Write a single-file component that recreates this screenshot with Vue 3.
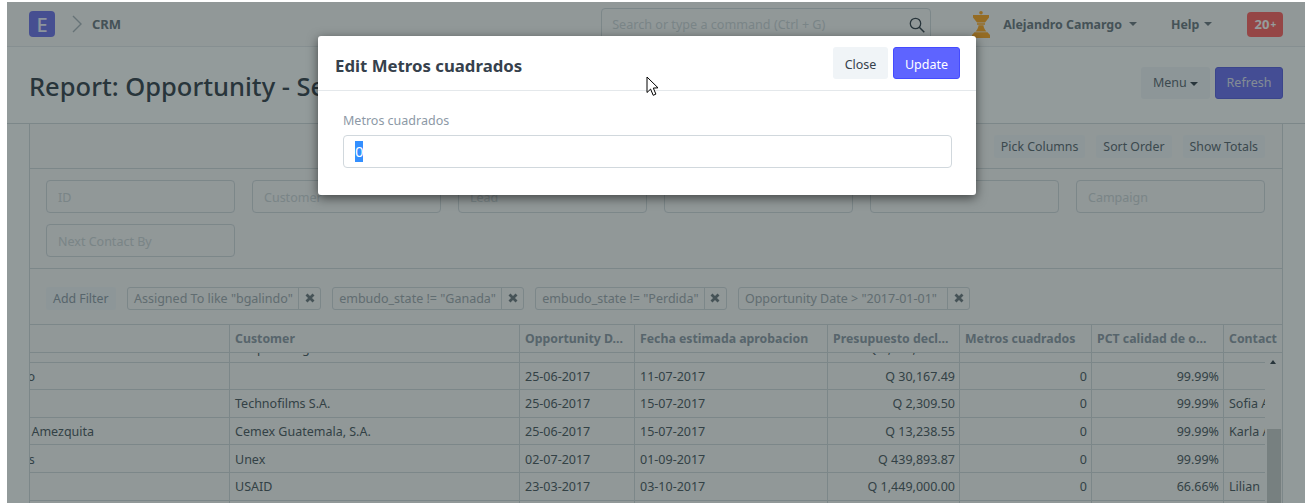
<script setup>
const filters = ['ID', 'Customer', 'Lead', '', '', 'Campaign', 'Next Contact By']
const chips = ['Assigned To like "bgalindo"', 'embudo_state != "Ganada"', 'embudo_state != "Perdida"', 'Opportunity Date > "2017-01-01"']
const head = ['', 'Customer', 'Opportunity D...', 'Fecha estimada aprobacion', 'Presupuesto decl...', 'Metros cuadrados', 'PCT calidad de o...', 'Contact']
const rows = [
  ['Rocio Solis', 'Grupo Mongo', '24-06-2017', '19-07-2017', 'Q 1,166,304.84', '0', '99.99%', ''],
  ['Alvaro', '', '25-06-2017', '11-07-2017', 'Q 30,167.49', '0', '99.99%', ''],
  ['', 'Technofilms S.A.', '25-06-2017', '15-07-2017', 'Q 2,309.50', '0', '99.99%', 'Sofia Alvarez'],
  ['Karla Amezquita', 'Cemex Guatemala, S.A.', '25-06-2017', '15-07-2017', 'Q 13,238.55', '0', '99.99%', 'Karla Amezquita'],
  ['Carlos', 'Unex', '02-07-2017', '01-09-2017', 'Q 439,893.87', '0', '99.99%', ''],
  ['', 'USAID', '23-03-2017', '03-10-2017', 'Q 1,449,000.00', '0', '66.66%', 'Lilian'],
  ['', '', '', '', '', '', '', '']
]
</script>

<template>
  <div class="root">
    <div class="page">
      <header class="nav">
        <div class="logo">E</div>
        <svg class="chev" width="10" height="18" viewBox="0 0 10 18"><path d="M1 1l8 8-8 8" fill="none" stroke="#a9b3bb" stroke-width="1.4" /></svg>
        <span class="crumb">CRM</span>
        <div class="search">
          <span class="search-ph">Search or type a command (Ctrl + G)</span>
          <svg width="16" height="16" viewBox="0 0 16 16"><circle cx="6.5" cy="6.5" r="5.2" fill="none" stroke="#36414c" stroke-width="1.3" /><path d="M10.3 10.3l5 5" stroke="#36414c" stroke-width="1.5" /></svg>
        </div>
        <svg class="king" width="20" height="27" viewBox="0 0 20 27">
          <circle cx="10" cy="1.800" r="1.800" fill="#ffa722" />
          <path fill="#ffa722" d="M2 4h16v2.500l-4 5H6l-4-5zM6 12.300h8v1.500H6zM7.500 14.300h5c0 2 1 4.200 3 6.200H4.500c2-2 3-4.200 3-6.200zM3.500 21.200h13l2.500 2.800v3H1v-3z" />
        </svg>
        <span class="user">Alejandro Camargo</span><i class="caret user-caret"></i>
        <span class="help">Help</span><i class="caret help-caret"></i>
        <span class="badge">20<small>+</small></span>
      </header>

      <div class="head">
        <h1 class="title">Report: Opportunity - Seguimiento</h1>
        <div class="head-actions">
          <button class="btn menu">Menu <i class="caret dark"></i></button>
          <button class="btn refresh">Refresh</button>
        </div>
      </div>

      <section class="card">
        <div class="tools">
          <button class="btn sm">Pick Columns</button>
          <button class="btn sm">Sort Order</button>
          <button class="btn sm">Show Totals</button>
        </div>
        <div class="filters">
          <div v-for="(f, i) in filters" :key="i" class="field">{{ f }}</div>
        </div>
        <div class="chips">
          <button class="btn sm add">Add Filter</button>
          <div v-for="c in chips" :key="c" class="chip">
            <span class="chip-text">{{ c }}</span>
            <span class="chip-x"><svg width="10" height="10" viewBox="0 0 10 10"><path d="M1.500 1.500l7 7M8.500 1.500l-7 7" stroke="#6d7880" stroke-width="2.800" /></svg></span>
          </div>
        </div>
        <div class="tbl">
          <div class="tbl-inner">
            <div class="row hd">
              <div v-for="(h, i) in head" :key="i" class="cell">{{ h }}</div>
            </div>
            <div class="body">
              <div class="body-inner">
                <div v-for="(r, ri) in rows" :key="ri" class="row">
                  <div v-for="(c, ci) in r" :key="ci" class="cell" :class="{ num: ci >= 4 && ci <= 6 }">{{ c }}</div>
                </div>
              </div>
            </div>
          </div>
          <div class="scrollbar"><i class="sb-up"></i><i class="sb-thumb"></i></div>
        </div>
      </section>
    </div>

    <div class="backdrop"></div>

    <div class="modal">
      <div class="modal-head">
        <h4 class="modal-title">Edit Metros cuadrados</h4>
        <div class="modal-actions">
          <button class="btn close">Close</button>
          <button class="btn update">Update</button>
        </div>
      </div>
      <div class="modal-body">
        <label class="label">Metros cuadrados</label>
        <div class="input"><span class="sel">0</span></div>
      </div>
    </div>

    <svg class="cursor" width="14" height="21" viewBox="0 0 14 21">
      <path d="M1 1v15.500l3.600-3.400 2.600 6.200 2.700-1.200-2.600-6 4.700-.300z" fill="#fff" stroke="#000" stroke-width="1" />
    </svg>
  </div>
</template>

<style>
html, body { margin: 0; background: #fff; }
</style>

<style scoped>
* { box-sizing: border-box; }
.root {
  position: relative;
  width: 1305px;
  height: 503px;
  overflow: hidden;
  background: #fff;
  font-family: "Noto Sans", "Open Sans", sans-serif;
  font-size: 12.5px;
  color: #36414c;
}
.page {
  position: absolute;
  inset: 2px 0 0 7px;
  background: #fafbfc;
  display: flex;
  flex-direction: column;
  overflow: hidden;
}
.nav {
  height: 45px;
  flex: none;
  display: flex;
  align-items: center;
  padding-left: 22px;
  background: #f8f8f8;
  border-bottom: 1px solid #e4e8eb;
}
.logo {
  width: 26px;
  height: 26px;
  border-radius: 4px;
  background: #6e72ea;
  color: #eef0ff;
  font-size: 20px;
  font-weight: 500;
  display: flex;
  align-items: center;
  justify-content: center;
}
.chev { margin-left: 17px; }
.crumb { margin-left: 10px; font-weight: 700; font-size: 13px; color: #6c7680; }
.search {
  margin-left: 480px;
  width: 330px;
  height: 33px;
  margin-top: 1px;
  border: 1px solid #d1d8dd;
  border-radius: 4px;
  display: flex;
  align-items: center;
  justify-content: space-between;
  padding: 0 5px 0 10px;
  font-size: 12.600px;
  color: #cdd4d8;
}
.king { margin-left: 40px; margin-top: 1px; }
.user { margin-left: 12px; font-weight: 700; font-size: 12.400px; color: #6c7680; }
.caret {
  display: inline-block;
  width: 0;
  height: 0;
  border-left: 4px solid transparent;
  border-right: 4px solid transparent;
  border-top: 4px solid #6c7680;
  vertical-align: middle;
}
.caret.dark { border-top-color: #36414c; }
.user-caret { margin-left: 7px; }
.help { margin-left: 34px; font-weight: 700; font-size: 12.400px; color: #6c7680; }
.help-caret { margin-left: 5px; }
.badge {
  margin-left: 35px;
  width: 36px;
  height: 25px;
  border-radius: 4px;
  background: #ff6060;
  color: #fff;
  font-weight: 700;
  font-size: 13px;
  display: flex;
  align-items: center;
  justify-content: center;
}
.badge small { font-size: 10px; margin-left: 1px; }
.head {
  height: 77px;
  flex: none;
  display: flex;
  align-items: center;
  justify-content: space-between;
  padding: 2px 22px 0 22px;
  background: #fcfdfd;
  border-bottom: 1px solid #d1d8dd;
}
.title { margin: 0; font-size: 25.500px; font-weight: 500; color: #36414c; white-space: nowrap; }
.head-actions { display: flex; gap: 5px; margin-top: -7px; }
.btn {
  font: inherit;
  border: 0;
  border-radius: 3px;
  background: #f0f4f7;
  color: #36414c;
  padding: 0;
}
.menu { width: 69px; height: 32px; font-size: 12.5px; color: #5a6670; }
.refresh { width: 68px; height: 32px; background: #6a6ef0; border: 1px solid #5a5ee0; color: #dfe0f2; }
.card {
  margin: 0 22px 0 22px;
  flex: 1;
  border-left: 1px solid #d1d8dd;
  border-right: 1px solid #d1d8dd;
  background: #f7f7f7;
  min-height: 0;
  display: flex;
  flex-direction: column;
}
.tools {
  height: 45px;
  flex: none;
  display: flex;
  align-items: center;
  justify-content: flex-end;
  gap: 11px;
  padding: 0 17px;
  border-bottom: 1px solid #d1d8dd;
}
.sm { height: 23px; padding: 0 7px; font-size: 12.350px; color: #5a6670; }
.filters {
  height: 100px;
  flex: none;
  display: grid;
  grid-template-columns: repeat(6, 189px);
  column-gap: 17px;
  row-gap: 11px;
  align-content: start;
  padding: 11px 16px 0;
  border-bottom: 1px solid #d1d8dd;
}
.field {
  height: 33px;
  border: 1px solid #d1d8dd;
  border-radius: 4px;
  padding: 1px 11px 0;
  display: flex;
  align-items: center;
  color: #cdd4d8;
  font-size: 12.500px;
}
.chips {
  height: 56px;
  flex: none;
  display: flex;
  align-items: center;
  gap: 11.400px;
  padding: 3px 16px 0;
  border-bottom: 1px solid #d1d8dd;
}
.add { width: 69.600px; padding: 0; color: #8d99a6; }
.chip {
  height: 23px;
  display: flex;
  border: 1px solid #d1d8dd;
  border-radius: 3px;
  align-items: stretch;
}
.chip-text { padding: 0 5.500px 0 6px; display: flex; align-items: center; white-space: nowrap; font-size: 12.500px; color: #a0a8b0; }
.chip:last-child .chip-text { padding-right: 10.500px; }
.chip-x { width: 21.500px; display: flex; align-items: center; justify-content: center; border-left: 1px solid #d1d8dd; }
.tbl { position: relative; flex: 1; min-height: 0; overflow: hidden; }
.tbl-inner { margin-left: -37px; width: 1400px; height: 100%; display: flex; flex-direction: column; }
.row {
  display: grid;
  grid-template-columns: 237px 290px 115px 193px 132px 132px 132px 200px;
  height: 27.600px;
  border-bottom: 1px solid #d1d8dd;
}
.hd { height: 28px; flex: none; }
.cell {
  padding: 1px 5px 0;
  display: flex;
  align-items: center;
  border-right: 1px solid #d1d8dd;
  white-space: nowrap;
  overflow: hidden;
  font-size: 12.500px;
  color: #4b575f;
}
.hd .cell { padding-top: 0; font-weight: 700; color: #8d99a6; font-size: 12.300px; }
.num { justify-content: flex-end; padding-right: 4px; }
.body { flex: 1; min-height: 0; overflow: hidden; }
.body-inner { margin-top: -18px; }
.scrollbar {
  position: absolute;
  right: 0;
  top: 29px;
  bottom: 0;
  width: 17px;
  background: #f7f7f7;
}
.sb-up {
  position: absolute;
  left: 5px;
  top: 6px;
  width: 0;
  height: 0;
  border-left: 3.500px solid transparent;
  border-right: 3.500px solid transparent;
  border-bottom: 4px solid #36414c;
}
.sb-thumb {
  position: absolute;
  left: 2px;
  right: 1px;
  top: 75px;
  bottom: 0;
  background: #c8cccc;
}
.backdrop { position: absolute; inset: 2px 0 0 7px; background: rgba(25, 40, 40, .46); }
.modal {
  position: absolute;
  left: 318px;
  top: 36px;
  width: 658px;
  height: 159px;
  background: #fff;
  border-radius: 3px;
  box-shadow: 0 3px 11px rgba(0, 0, 0, .55);
}
.modal-head {
  height: 55px;
  border-bottom: 1px solid #e4e8eb;
  display: flex;
  align-items: center;
  justify-content: space-between;
  padding: 0 16px 0 17px;
}
.modal-title { margin: 5px 0 0; font-size: 16.800px; font-weight: 700; color: #36414c; }
.modal-actions { display: flex; gap: 5px; }
.close { width: 55px; height: 32px; font-size: 12.500px; padding-top: 2px; }
.update { width: 67px; height: 32px; font-size: 12.500px; padding-top: 2px; background: #5e64ff; border: 1px solid #444bff; color: #fff; }
.modal-body { padding: 21px 24px 0 25px; }
.label { display: block; color: #8d99a6; font-size: 12.500px; line-height: 18px; margin-bottom: 5px; }
.input {
  height: 33px;
  border: 1px solid #d1d8dd;
  border-radius: 4px;
  padding: 0 11px;
  display: flex;
  align-items: center;
  font-size: 15px;
  color: #fff;
}
.sel { background: #338fff; width: 8px; height: 21px; line-height: 21px; text-align: center; }
.cursor { position: absolute; left: 646px; top: 76px; }
</style>
